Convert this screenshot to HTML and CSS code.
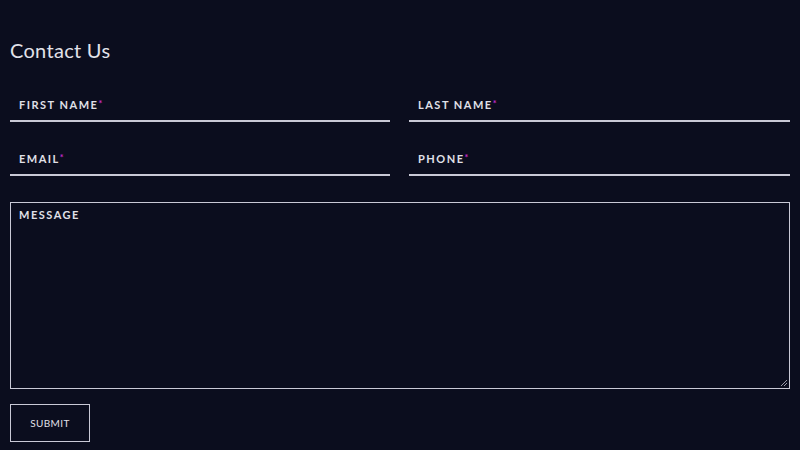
FILE: index.html
```html
<!DOCTYPE html>
<html>
<head>
<meta charset="utf-8">
<link rel="stylesheet" href="styles.css">
</head>
<body>
<div class="page">
  <h1 class="title">Contact Us</h1>
  <form class="form">
    <div class="row">
      <div class="field"><span class="label">First Name<span class="req">*</span></span></div>
      <div class="field"><span class="label">Last Name<span class="req">*</span></span></div>
    </div>
    <div class="row">
      <div class="field"><span class="label">Email<span class="req">*</span></span></div>
      <div class="field"><span class="label">Phone<span class="req">*</span></span></div>
    </div>
    <div class="message">
      <span class="label">Message</span>
      <svg class="grip" width="8" height="8" viewBox="0 0 8 8"><path d="M7 1L1 7M7 4L4 7" stroke="#9a9aa8" stroke-width="1"/></svg>
    </div>
    <div class="actions"><button type="button" class="submit">Submit</button></div>
  </form>
</div>
</body>
</html>
```
FILE: styles.css
```css
* { box-sizing: border-box; }
html, body { margin: 0; padding: 0; }
body {
  background: #0b0d1e;
  width: 800px;
  height: 450px;
  overflow: hidden;
  font-family: "Lato", "Noto Sans", sans-serif;
  color: #e4e4ec;
}
.page {
  padding: 36px 10px 0 10px;
}
.title {
  margin: 0;
  font-weight: 400;
  font-size: 20px;
  line-height: 28px;
  letter-spacing: 0.3px;
  color: #e2e2ea;
}
.form {
  margin-top: 32px;
  display: flex;
  flex-direction: column;
}
.row {
  display: grid;
  grid-template-columns: 380px 381px;
  column-gap: 19px;
  margin-bottom: 26px;
}
.row + .row {
  margin-top: 2px;
}
.field {
  height: 26px;
  border-bottom: 2px solid #c9c9d6;
  padding: 0 9px;
}
.label {
  display: block;
  font-size: 11px;
  font-weight: 700;
  letter-spacing: 1.5px;
  text-transform: uppercase;
  color: #e0e0e8;
  line-height: 16px;
}
.req {
  color: #c52ac8;
  font-size: 9px;
  letter-spacing: 0;
  vertical-align: 2px;
}
.message {
  height: 187px;
  border: 1px solid #c9c9d6;
  padding: 4px 8px 0 8px;
  position: relative;
}
.grip {
  position: absolute;
  right: 1px;
  bottom: 1px;
}
.actions {
  margin-top: 15px;
}
.submit {
  display: block;
  width: 80px;
  height: 38px;
  background: transparent;
  border: 1px solid #c9c9d6;
  color: #e0e0e8;
  font-family: "Lato", "Noto Sans", sans-serif;
  font-size: 10px;
  letter-spacing: 0.4px;
  text-transform: uppercase;
  padding: 0;
  cursor: pointer;
}
```
